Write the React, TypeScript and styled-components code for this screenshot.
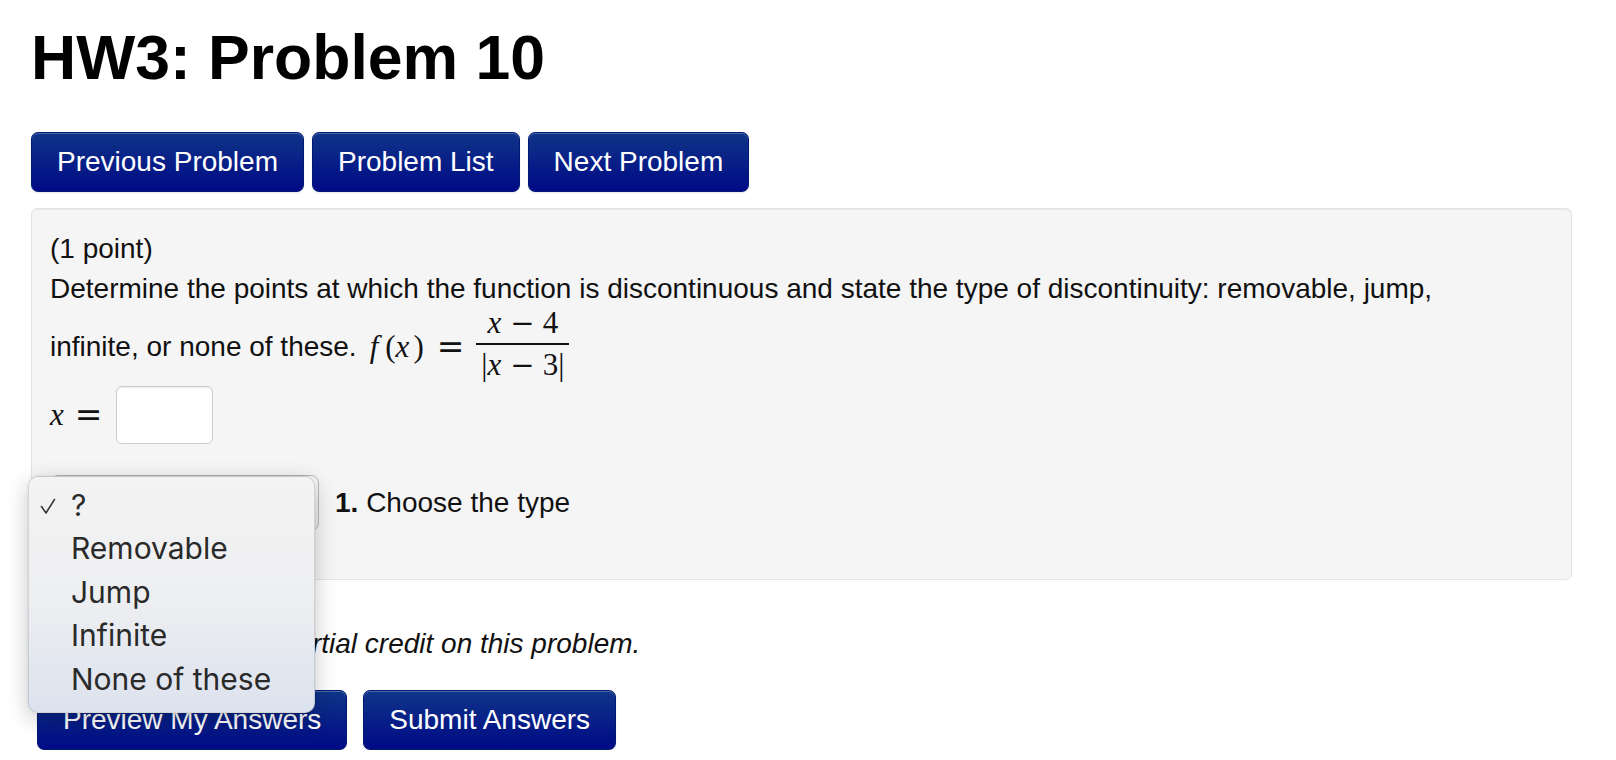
import styled, { createGlobalStyle } from "styled-components"

const GlobalStyle = createGlobalStyle`
  html, body {
    margin: 0;
    padding: 0;
    background: #fff;
  }
  body {
    font-family: "Liberation Sans", Arial, Helvetica, sans-serif;
    color: #111;
  }
`

const OPTIONS = ["?", "Removable", "Jump", "Infinite", "None of these"]

const CheckMark = () => (
  <svg width="16" height="16" viewBox="0 0 16 16" fill="none">
    <path d="M1.5 8.5 L6 15 L14.5 1.5" stroke="#3a3a3a" strokeWidth="1.6" strokeLinecap="round" strokeLinejoin="round" />
  </svg>
)

export default function App() {
  return (
    <>
      <GlobalStyle />
      <Page>
        <Title>HW3: Problem 10</Title>

        <NavBar>
          <BlueButton>Previous Problem</BlueButton>
          <BlueButton>Problem List</BlueButton>
          <BlueButton>Next Problem</BlueButton>
        </NavBar>

        <ProblemWell>
          <TextLine>(1 point)</TextLine>
          <TextLine>
            Determine the points at which the function is discontinuous and state the type of
            discontinuity: removable, jump,
          </TextLine>
          <FormulaLine>
            <span>infinite, or none of these.</span>
            <MathRow>
              <Var $after={7}>f</Var>
              <Sym>(</Sym>
              <Var $after={4}>x</Var>
              <Sym>)</Sym>
              <Rel $before={13}>=</Rel>
              <Fraction>
                <Numerator>
                  <Var $after={1}>x</Var>
                  <Minus>−</Minus>
                  <Sym>4</Sym>
                </Numerator>
                <Denominator>
                  <Sym>|</Sym>
                  <Var $after={1}>x</Var>
                  <Minus>−</Minus>
                  <Sym>3</Sym>
                  <Sym>|</Sym>
                </Denominator>
              </Fraction>
            </MathRow>
          </FormulaLine>

          <AnswerRow>
            <MathRow>
              <Var $after={2}>x</Var>
              <Rel $before={9}>=</Rel>
            </MathRow>
            <AnswerInput type="text" />
          </AnswerRow>

          <SelectRow>
            <SelectWrap>
              <FakeSelect />
              <Popup>
                {OPTIONS.map((option, i) => (
                  <PopupItem key={option}>
                    <CheckCol>{i === 0 && <CheckMark />}</CheckCol>
                    {option}
                  </PopupItem>
                ))}
              </Popup>
            </SelectWrap>
            <SelectLabel>
              <b>1.</b> Choose the type
            </SelectLabel>
          </SelectRow>
        </ProblemWell>

        <CreditNote>You can earn partial credit on this problem.</CreditNote>

        <SubmitBar>
          <BlueButton>Preview My Answers</BlueButton>
          <BlueButton>Submit Answers</BlueButton>
        </SubmitBar>
      </Page>
    </>
  )
}

const Page = styled.div`
  padding: 23px 44px 0 31px;
`

const Title = styled.h1`
  margin: 0;
  font-size: 62.5px;
  line-height: 68px;
  font-weight: bold;
  color: #000;
`

const NavBar = styled.div`
  display: flex;
  gap: 8px;
  margin-top: 41px;
`

const BlueButton = styled.button`
  font-family: "Liberation Sans", Arial, Helvetica, sans-serif;
  font-size: 28px;
  line-height: 40px;
  padding: 9px 25px;
  color: #fff;
  border: 1px solid #001a72;
  border-radius: 7px;
  background: linear-gradient(#0f3588, #000a86);
  box-shadow: inset 0 1px 0 rgba(255, 255, 255, 0.25), 0 1px 2px rgba(0, 0, 0, 0.1);
  cursor: pointer;
  white-space: nowrap;
`

const ProblemWell = styled.div`
  margin-top: 16px;
  padding: 20px 18px 48px;
  background: #f5f5f5;
  border: 1px solid #e3e3e3;
  border-radius: 6px;
  box-shadow: inset 0 1px 1px rgba(0, 0, 0, 0.05);
  font-size: 28px;
  line-height: 40px;
`

const TextLine = styled.div``

const FormulaLine = styled.div`
  display: flex;
  align-items: center;
`

const MathRow = styled.span`
  display: inline-flex;
  align-items: center;
  font-family: "Liberation Serif", "Times New Roman", serif;
  font-size: 31px;
  margin-left: 13px;
`

const Var = styled.span<{ $after?: number }>`
  font-style: italic;
  margin-right: ${({ $after }) => $after ?? 0}px;
`

const Sym = styled.span``

const Rel = styled.span<{ $before: number }>`
  font-family: "DejaVu Serif", serif;
  font-size: 33px;
  line-height: 36px;
  margin-left: ${({ $before }) => $before}px;
`

const Minus = styled.span`
  font-family: "DejaVu Serif", serif;
  font-size: 29px;
  margin: 0 8px;
`

const Fraction = styled.span`
  display: inline-flex;
  flex-direction: column;
  align-items: center;
  margin-left: 12px;
  padding: 0 5px;
`

const Numerator = styled.span`
  display: flex;
  align-items: center;
  justify-content: center;
  align-self: stretch;
  line-height: 28px;
  margin: 0 -5px;
  padding: 0 5px 6px;
  border-bottom: 2px solid #111;
`

const Denominator = styled.span`
  display: flex;
  align-items: center;
  line-height: 40px;
`

const AnswerRow = styled.div`
  display: flex;
  align-items: center;
  gap: 14px;
  margin-top: 1px;

  ${MathRow} {
    margin-left: 0;
  }
`

const AnswerInput = styled.input`
  width: 97px;
  height: 58px;
  box-sizing: border-box;
  border: 1px solid #cccccc;
  border-radius: 6px;
  background: #fff;
  box-shadow: inset 0 1px 1px rgba(0, 0, 0, 0.075);
  outline: none;
`

const SelectRow = styled.div`
  display: flex;
  align-items: center;
  gap: 16px;
  margin-top: 31px;
`

const SelectWrap = styled.div`
  position: relative;
`

const FakeSelect = styled.div`
  width: 269px;
  height: 56px;
  box-sizing: border-box;
  border: 1px solid #b8b8b8;
  border-radius: 8px;
  background: linear-gradient(#fbfbfb, #e9e9e9);
`

const Popup = styled.div`
  position: absolute;
  left: -22px;
  top: 1px;
  width: 287px;
  box-sizing: border-box;
  padding: 6px 0 11px;
  border: 1px solid rgba(0, 0, 0, 0.12);
  border-radius: 10px;
  background: linear-gradient(#f3f3f3 0%, #eeeff1 50%, #dce2ee 100%);
  box-shadow: 0 6px 22px rgba(0, 0, 0, 0.22), 0 0 2px rgba(0, 0, 0, 0.12);
  z-index: 2;
`

const PopupItem = styled.div`
  display: flex;
  align-items: center;
  height: 43.5px;
  padding-left: 11px;
  font-family: Inter, "Noto Sans", sans-serif;
  font-size: 30px;
  color: #2a2a2a;
`

const CheckCol = styled.span`
  display: inline-flex;
  width: 31px;
  padding-top: 2px;
`

const SelectLabel = styled.span`
  b {
    font-weight: bold;
  }
`

const CreditNote = styled.div`
  margin: 44px 0 0 77px;
  font-size: 28px;
  line-height: 40px;
  font-style: italic;
  color: #111;
`

const SubmitBar = styled.div`
  display: flex;
  gap: 16px;
  margin: 26px 0 0 6px;
`
